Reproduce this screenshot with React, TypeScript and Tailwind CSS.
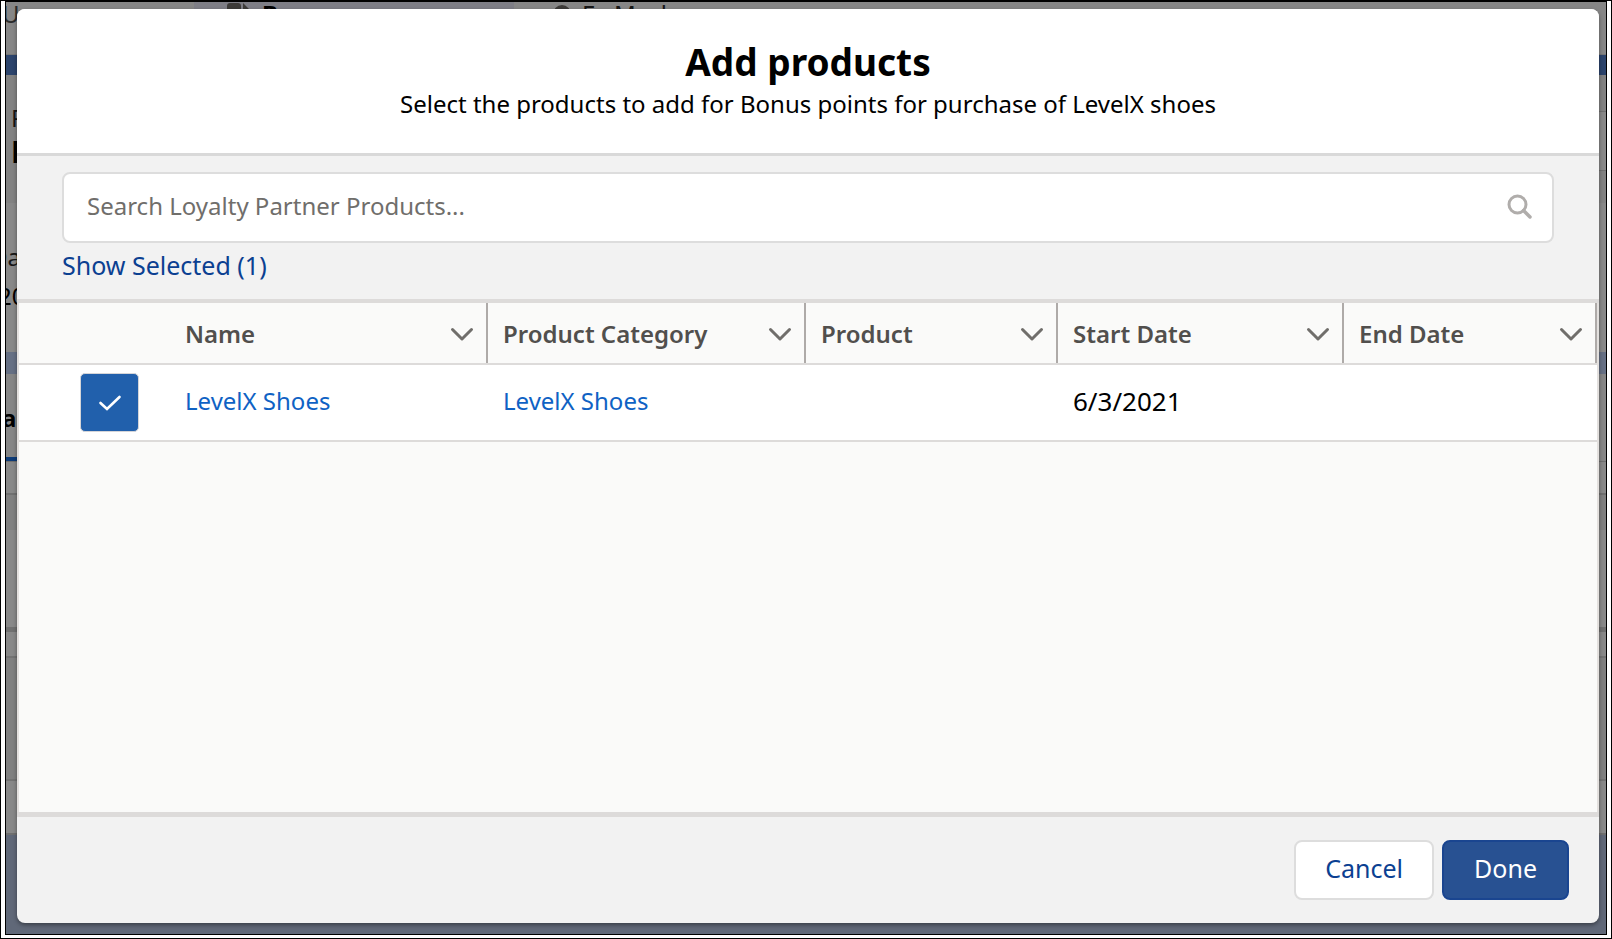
import React, { useState } from 'react';

const columns = [
  { label: 'Name', width: 'w-[318px]' },
  { label: 'Product Category', width: 'w-[318px]' },
  { label: 'Product', width: 'w-[252px]' },
  { label: 'Start Date', width: 'w-[286px]' },
  { label: 'End Date', width: 'w-[253px]' },
];

const Chevron: React.FC = () => (
  <svg width="24" height="16" viewBox="0 0 24 16" fill="none" aria-hidden="true">
    <path d="M2.5 3.5 L12 13 L21.5 3.5" stroke="#706e6b" strokeWidth="3" strokeLinecap="round" strokeLinejoin="round" />
  </svg>
);

/* Dimmed record page that shows around the edges of the modal */
const Backdrop: React.FC = () => (
  <div className="absolute inset-0 flex flex-col overflow-hidden bg-[#868686] text-2xl text-[#161616]" aria-hidden="true">
    <div className="relative h-[53px] shrink-0 border-b border-[#777777]">
      <span className="absolute -left-1 -top-1 text-[#2b2b2b]">U</span>
      <div className="absolute left-[188px] top-0 h-full w-[320px] bg-[#7e7e86]"></div>
      <svg className="absolute left-[221px] top-0" width="24" height="20" viewBox="0 0 24 20" fill="#3d3b39">
        <path d="M0 4 Q0 1 3 1 H11 Q14 1 14 4 V20 H0 Z M16 1 L23 8 V20 H16 Z" />
      </svg>
      <span className="absolute left-[256px] -top-1 font-bold text-black">Bonus</span>
      <svg className="absolute left-[546px] top-0" width="20" height="20" viewBox="0 0 20 20" fill="none" stroke="#3d3b39" strokeWidth="4">
        <circle cx="10" cy="12" r="7" />
      </svg>
      <span className="absolute left-[576px] -top-1">Er. Mack</span>
    </div>
    <div className="h-[20px] shrink-0 bg-[#2c446c]"></div>
    <div className="relative h-[128px] shrink-0 bg-[#828282]">
      <span className="absolute left-[5px] top-[29px] leading-7">P</span>
      <span className="absolute left-[5px] top-[62px] text-3xl font-bold leading-none text-black">B</span>
      <div className="absolute right-0 top-[36px] h-[60px] w-12 border-y border-[#707070] bg-[#888888]"></div>
    </div>
    <div className="relative h-[149px] shrink-0 bg-[#888888]">
      <span className="absolute -left-4 top-[38px]">Date</span>
      <span className="absolute -left-2 top-[77px] text-black">2021</span>
    </div>
    <div className="h-[22px] shrink-0 bg-[#667084]"></div>
    <div className="relative h-[83px] shrink-0 bg-[#868686]">
      <span className="absolute -left-1 top-[28px] font-bold text-black">a</span>
    </div>
    <div className="h-[4px] w-1/2 shrink-0 bg-[#0d3b78]"></div>
    <div className="h-[32px] shrink-0 border-t border-[#6f6f6f] bg-[#888888]"></div>
    <div className="h-[37px] shrink-0 border-t-2 border-[#707070] bg-[#808080]"></div>
    <div className="h-[97px] shrink-0 bg-[#888888]"></div>
    <div className="h-[5px] shrink-0 bg-[#707070]"></div>
    <div className="h-[24px] shrink-0 bg-[#888888]"></div>
    <div className="h-[123px] shrink-0 border-t-2 border-[#737373] bg-[#808080]"></div>
    <div className="h-[54px] shrink-0 border-t-2 border-[#737373] bg-[#888888]"></div>
    <div className="grow border-t-2 border-[#6f6f6f] bg-[#606878]"></div>
  </div>
);

const App: React.FC = () => {
  const [checked, setChecked] = useState(true);

  return (
    <div className="h-screen border border-black bg-white px-1 pb-[3px] font-['Noto_Sans','Open_Sans',sans-serif]">
      <div className="relative h-full border border-black">
        <Backdrop />

        <section
          role="dialog"
          aria-labelledby="modal-title"
          className="relative mx-[11px] mr-[7px] flex h-full flex-col pb-[11px] pt-[7px] text-2xl leading-8 text-black"
        >
          <div className="flex grow flex-col overflow-hidden rounded-lg bg-[#f2f2f2] shadow-[0_2px_4px_rgba(0,0,0,0.4)]">
            <header className="h-[147px] shrink-0 border-b-[3px] border-[#d9d9d9] bg-white pt-[29px] text-center">
              <h1 id="modal-title" className="text-[37px] font-bold leading-[48px]">Add products</h1>
              <p className="leading-9">Select the products to add for Bonus points for purchase of LevelX shoes</p>
            </header>

            {/* Search */}
            <div className="h-[147px] shrink-0 border-b-4 border-[#dddbda] px-[45px] pt-4">
              <div className="flex h-[71px] items-center rounded-lg border-2 border-[#dddddd] bg-white pb-[2px] pl-[23px] pr-[19px]">
                <input
                  type="search"
                  aria-label="Search Loyalty Partner Products"
                  placeholder="Search Loyalty Partner Products..."
                  className="h-full grow bg-transparent pb-[2px] outline-none placeholder:text-[#706e6b]"
                />
                <svg width="26" height="26" viewBox="0 0 26 26" fill="none" stroke="#b0adab" strokeWidth="3" aria-hidden="true">
                  <circle cx="10.5" cy="10.5" r="8.5" />
                  <path d="M16.5 16.5 L23 23" strokeWidth="3.5" strokeLinecap="round" />
                </svg>
              </div>
              <button type="button" className="mt-[6px] block text-[25px] text-[#0b4091]">Show Selected (1)</button>
            </div>

            {/* Results */}
            <div className="grow border-x-2 border-[#e3e0de] bg-[#fafaf9]">
              <table className="w-full table-fixed border-collapse text-left">
                <thead>
                  <tr className="h-[61px] border-b-2 border-[#dddbda]">
                    <th className="w-[151px]"><span className="sr-only">Select</span></th>
                    {columns.map((column) => (
                      <th key={column.label} className={`${column.width} p-0`}>
                        <div className="flex h-[60px] items-center justify-between border-r-2 border-[#aeaaa8] pl-[15px] pr-3 pt-[2px] font-semibold text-[#514f4d]">
                          {column.label}
                          <button type="button" aria-label={`${column.label} column actions`}>
                            <Chevron />
                          </button>
                        </div>
                      </th>
                    ))}
                  </tr>
                </thead>
                <tbody>
                  <tr className="h-[77px] border-b-2 border-[#dddbda] bg-white">
                    <td className="p-0 pl-[61px]">
                      <label className="relative block size-[59px]">
                        <input
                          type="checkbox"
                          aria-label="Select LevelX Shoes"
                          checked={checked}
                          onChange={() => setChecked(!checked)}
                          className="block size-full appearance-none rounded-[5px] border border-[#d5d5d8] bg-white checked:bg-[#2160ac]"
                        />
                        {checked && (
                          <svg className="pointer-events-none absolute inset-0 m-auto" width="24" height="18" viewBox="0 0 24 18" fill="none" stroke="white" strokeWidth="2.6" aria-hidden="true">
                            <path d="M2.5 9 L9 15 L21.5 3" strokeLinecap="round" />
                          </svg>
                        )}
                      </label>
                    </td>
                    <td className="pb-1 pl-[15px] pt-0"><a href="#name" className="text-[#0f62c4]">LevelX Shoes</a></td>
                    <td className="pb-1 pl-[15px] pt-0"><a href="#category" className="text-[#0f62c4]">LevelX Shoes</a></td>
                    <td></td>
                    <td className="pb-1 pl-[15px] pt-0 text-[26px]">6/3/2021</td>
                    <td></td>
                  </tr>
                </tbody>
              </table>
            </div>

            <footer className="flex h-[111px] shrink-0 justify-end gap-2 border-t-[5px] border-[#dddbda] pr-[30px] pt-[23px] text-[25px]">
              <button type="button" className="h-[60px] rounded-lg border-2 border-[#dddddd] bg-white px-[29px] pb-1 text-[#0b4091]">Cancel</button>
              <button type="button" className="h-[60px] rounded-lg border-2 border-[#1a4590] bg-[#285192] px-[30px] pb-1 text-white">Done</button>
            </footer>
          </div>
        </section>
      </div>
    </div>
  );
};

export default App;
